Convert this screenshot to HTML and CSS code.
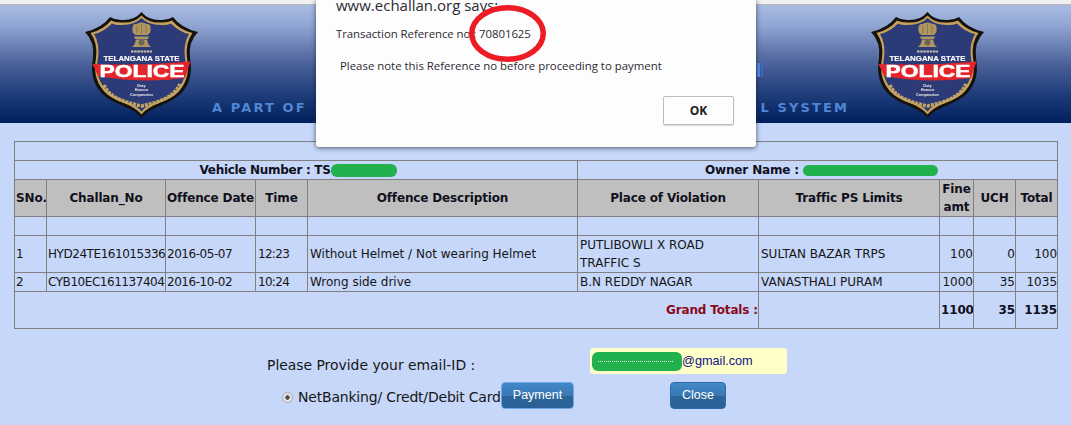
FILE: index.html
```html
<!DOCTYPE html>
<html lang="en">
<head>
<meta charset="utf-8">
<title>e-Challan payment</title>
<link rel="stylesheet" href="styles.css">
</head>
<body>
<div class="top-strip"></div>
<header class="banner">
  <svg class="logo" viewBox="0 0 113 106">
    <path d="M56.5 0Q49 9 36 8Q30 8 25 5Q17 16 0 20Q10 30 8 46C5 62 9 76 21 85C33 94 48 95 56.5 106C65 95 80 94 92 85C104 76 108 62 105 46Q103 30 113 20Q96 16 88 5Q83 8 77 8Q64 9 56.5 0Z" fill="#15120e"/>
    <path d="M56.5 3.500Q49 11.500 36 10.500Q30 10.500 26 8.500Q18 18 5.500 21Q13 31 11 46C8 61 12 74 23 83C34 91 48 92 56.5 102.500C65 92 79 91 90 83C101 74 105 61 102 46Q100 31 107.500 21Q95 18 87 8.500Q83 10.500 77 10.500Q64 11.500 56.5 3.500Z" fill="#c5a15c"/>
    <path d="M56.5 6Q49 13.500 36 13Q30 13 27 11.500Q19 20 9 22Q15 32 13 46C10 60 14 73 25 81C35 89 49 90 56.500 99.500C64 90 78 89 88 81C99 73 103 60 100 46Q98 32 104 22Q94 20 86 11.500Q83 13 77 13Q64 13.500 56.500 6Z" fill="#2d3a78"/>
    <path d="M47.500 16Q47.500 11.500 51.500 12Q53.500 10.500 56.500 10.500Q59.500 10.500 61.500 12Q65.500 11.500 65.500 16Q66.500 21 62.500 23H50.500Q46.500 21 47.500 16ZM49 24.500h15l-1 2.500h-13zM51 27.500h11l1.500 5 2.500 2.500H47l2.500-2.500z" fill="#b09660"/>
    <path d="M56.500 12v10M52 13.500v8M61 13.500v8" stroke="#8a7448" stroke-width=".9"/>
    <circle cx="56.500" cy="30.500" r="3" fill="#6c6455"/>
    <path d="M46 39.500h21" stroke="#c9c3b0" stroke-width="2" stroke-dasharray="2.500 .7"/>
    <text class="logo-state" x="56.500" y="48.500" text-anchor="middle" textLength="76" lengthAdjust="spacingAndGlyphs">TELANGANA STATE</text>
    <path d="M7.500 52Q57 54 105.500 49.500L100 66Q57 72 13 64Z" fill="#e3252c"/>
    <text class="logo-police" x="57" y="64.500" text-anchor="middle" textLength="85" lengthAdjust="spacingAndGlyphs">POLICE</text>
    <text class="logo-motto" x="56.500" y="74.500" text-anchor="middle">Duty</text>
    <text class="logo-motto" x="56.500" y="79" text-anchor="middle">Honour</text>
    <text class="logo-motto" x="56.500" y="83.500" text-anchor="middle">Compassion</text>
    <path d="M19 73C24 85 38 90 56.500 94C75 90 89 85 95 72" fill="none" stroke="#c2a463" stroke-width="3.500" stroke-dasharray="3 1"/>
  </svg>
  <div class="tagline"><span>A PART OF</span><span>L SYSTEM</span></div>
  <svg class="logo" viewBox="0 0 113 106">
    <path d="M56.5 0Q49 9 36 8Q30 8 25 5Q17 16 0 20Q10 30 8 46C5 62 9 76 21 85C33 94 48 95 56.5 106C65 95 80 94 92 85C104 76 108 62 105 46Q103 30 113 20Q96 16 88 5Q83 8 77 8Q64 9 56.5 0Z" fill="#15120e"/>
    <path d="M56.5 3.500Q49 11.500 36 10.500Q30 10.500 26 8.500Q18 18 5.500 21Q13 31 11 46C8 61 12 74 23 83C34 91 48 92 56.5 102.500C65 92 79 91 90 83C101 74 105 61 102 46Q100 31 107.500 21Q95 18 87 8.500Q83 10.500 77 10.500Q64 11.500 56.5 3.500Z" fill="#c5a15c"/>
    <path d="M56.5 6Q49 13.500 36 13Q30 13 27 11.500Q19 20 9 22Q15 32 13 46C10 60 14 73 25 81C35 89 49 90 56.500 99.500C64 90 78 89 88 81C99 73 103 60 100 46Q98 32 104 22Q94 20 86 11.500Q83 13 77 13Q64 13.500 56.500 6Z" fill="#2d3a78"/>
    <path d="M47.500 16Q47.500 11.500 51.500 12Q53.500 10.500 56.500 10.500Q59.500 10.500 61.500 12Q65.500 11.500 65.500 16Q66.500 21 62.500 23H50.500Q46.500 21 47.500 16ZM49 24.500h15l-1 2.500h-13zM51 27.500h11l1.500 5 2.500 2.500H47l2.500-2.500z" fill="#b09660"/>
    <path d="M56.500 12v10M52 13.500v8M61 13.500v8" stroke="#8a7448" stroke-width=".9"/>
    <circle cx="56.500" cy="30.500" r="3" fill="#6c6455"/>
    <path d="M46 39.500h21" stroke="#c9c3b0" stroke-width="2" stroke-dasharray="2.500 .7"/>
    <text class="logo-state" x="56.500" y="48.500" text-anchor="middle" textLength="76" lengthAdjust="spacingAndGlyphs">TELANGANA STATE</text>
    <path d="M7.500 52Q57 54 105.500 49.500L100 66Q57 72 13 64Z" fill="#e3252c"/>
    <text class="logo-police" x="57" y="64.500" text-anchor="middle" textLength="85" lengthAdjust="spacingAndGlyphs">POLICE</text>
    <text class="logo-motto" x="56.500" y="74.500" text-anchor="middle">Duty</text>
    <text class="logo-motto" x="56.500" y="79" text-anchor="middle">Honour</text>
    <text class="logo-motto" x="56.500" y="83.500" text-anchor="middle">Compassion</text>
    <path d="M19 73C24 85 38 90 56.500 94C75 90 89 85 95 72" fill="none" stroke="#c2a463" stroke-width="3.500" stroke-dasharray="3 1"/>
  </svg>
  <span class="title-bit"></span>
</header>

<main class="content">
  <table class="challans">
    <colgroup>
      <col class="c-sno"><col class="c-no"><col class="c-date"><col class="c-time"><col class="c-desc">
      <col class="c-place"><col class="c-ps"><col class="c-fine"><col class="c-uch"><col class="c-total">
    </colgroup>
    <tbody>
      <tr class="r-thin"><td colspan="10"></td></tr>
      <tr class="r-thin">
        <th colspan="5" class="vehicle">Vehicle Number : TS<span class="redact r-vehicle"></span></th>
        <th colspan="5" class="owner">Owner Name : <span class="redact r-owner"></span></th>
      </tr>
      <tr class="r-head">
        <th>SNo.</th><th>Challan_No</th><th class="nowrap">Offence Date</th><th>Time</th><th>Offence Description</th>
        <th>Place of Violation</th><th>Traffic PS Limits</th><th>Fine amt</th><th>UCH</th><th>Total</th>
      </tr>
      <tr class="r-thin"><td></td><td></td><td></td><td></td><td></td><td></td><td></td><td></td><td></td><td></td></tr>
      <tr class="r-tall">
        <td>1</td><td class="digits">HYD24TE161015336</td><td class="digits">2016-05-07</td><td class="pad digits">12:23</td><td class="pad">Without Helmet / Not wearing Helmet</td>
        <td class="pad wrap">PUTLIBOWLI X ROAD TRAFFIC S</td><td class="pad">SULTAN BAZAR TRPS</td><td class="num">100</td><td class="num">0</td><td class="num">100</td>
      </tr>
      <tr class="r-thin">
        <td>2</td><td class="digits">CYB10EC161137404</td><td class="digits">2016-10-02</td><td class="pad digits">10:24</td><td class="pad">Wrong side drive</td>
        <td class="pad">B.N REDDY NAGAR</td><td class="pad">VANASTHALI PURAM</td><td class="num">1000</td><td class="num">35</td><td class="num">1035</td>
      </tr>
      <tr class="r-tall r-totals">
        <th colspan="6" class="grand">Grand Totals :</th><td></td><th class="num">1100</th><th class="num">35</th><th class="num">1135</th>
      </tr>
    </tbody>
  </table>

  <form class="pay">
    <div class="pay-email">
      <label class="pay-label" for="email">Please Provide your email-ID :</label>
      <div class="email-box" id="email"><span class="redact r-email"><span class="r-dots"></span></span>@gmail.com</div>
    </div>
    <div class="pay-method">
      <span class="radio"></span>
      <span class="method">NetBanking/ Credt/Debit Card</span>
      <button type="button" class="btn btn-focus">Payment</button>
      <button type="button" class="btn btn-close">Close</button>
    </div>
  </form>
</main>

<section class="dialog">
  <div class="dialog-title">www.echallan.org says:</div>
  <p class="dialog-ref">Transaction Reference no : 70801625</p>
  <p class="dialog-note">Please note this Reference no before proceeding to payment</p>
  <div class="dialog-actions"><button type="button" class="ok">OK</button></div>
</section>

<svg class="ring" viewBox="0 0 80 62"><ellipse cx="39.500" cy="31.500" rx="35.750" ry="25.750"/></svg>
</body>
</html>
```
FILE: styles.css
```css
* { box-sizing: border-box; }
html, body { margin: 0; height: 100%; }
body {
  position: relative;
  height: 425px;
  overflow: hidden;
  background: #c6d7f9;
  font-family: "DejaVu Sans", Verdana, sans-serif;
  color: #161616;
}

.top-strip { height: 5px; background: #f0f0f0; border-bottom: 1px solid #b9b9b9; }
.banner {
  display: flex;
  align-items: flex-start;
  height: 118px;
  padding: 7px 87px 0 85px;
  background: linear-gradient(#a9bce4 0%, #8fa4d2 18%, #4a6199 50%, #1b3a78 78%, #001f5c 100%);
}
.logo { flex: none; width: 113px; height: 106px; filter: blur(.35px); }
.logo-state { font: 700 8px "Liberation Sans", sans-serif; fill: #fff; stroke: #fff; stroke-width: .15px; }
.logo-police { font: 700 16.500px "Liberation Sans", sans-serif; fill: #fff; stroke: #fff; stroke-width: .5px; }
.logo-motto { font: 700 3.800px "Liberation Sans", sans-serif; fill: #f3f0e6; }

.tagline {
  flex: 1;
  display: flex;
  justify-content: space-between;
  margin: 88px 22px 0 14px;
  font: 700 13px "DejaVu Sans", sans-serif;
  letter-spacing: 2.100px;
  color: #4f86d6;
}
.title-bit {
  position: absolute;
  left: 757px;
  top: 63px;
  width: 6px;
  height: 14px;
  border-left: 3px solid #4d8ce6;
  border-right: 2px solid #3a69bc;
}

.content { padding: 18px 14px 0; }
.challans {
  width: 1044px;
  table-layout: fixed;
  border-collapse: collapse;
  border: 1px solid #2b2b33;
  font-size: 12px;
  line-height: 18px;
}
.c-sno { width: 32px; } .c-no { width: 119px; } .c-date { width: 90px; } .c-time { width: 52px; }
.c-desc { width: 270px; } .c-place { width: 181px; } .c-ps { width: 181px; } .c-fine { width: 34px; }
.c-uch { width: 42px; } .c-total { width: 42px; }
.challans th, .challans td {
  padding: 0 1px;
  border: 1px solid #808080;
  white-space: nowrap;
  overflow: hidden;
}
.challans th { font-weight: 700; text-align: center; font-size: 12px; letter-spacing: -.15px; color: #10101c; }
.r-thin { height: 19px; }
.r-head { height: 37px; }
.r-tall { height: 37px; }
.r-head th { background: #bfbfbf; white-space: normal; }
.challans .nowrap { white-space: nowrap; padding: 0; }
.challans .digits { letter-spacing: -.45px; }
.challans .pad { padding-left: 2px; }
.challans .pad.digits { letter-spacing: -.7px; }
.challans .wrap { white-space: normal; padding-right: 30px; }
.challans .num { text-align: right; padding-right: 0; }
.challans .grand { text-align: right; color: #8b0a1a; padding-right: 0; }
.challans .vehicle { padding-left: 5px; letter-spacing: -.3px; }
.challans .owner { padding-left: 9px; }

.redact { display: inline-block; background: #22b14c; border-radius: 6px; vertical-align: middle; }
.r-vehicle { width: 66px; height: 13px; }
.r-owner { width: 135px; height: 11px; }
.r-email { position: relative; flex: none; width: 90px; height: 19px; }
.r-dots { position: absolute; left: 6px; right: 9px; top: 9px; border-top: 1px dotted #e8f5e8; }

.pay { font-size: 14px; }
.pay-email { display: flex; align-items: flex-start; height: 26px; margin: 19px 0 0 253px; }
.pay-label { width: 323px; margin-top: 8px; font-size: 13.900px; line-height: 18px; }
.email-box {
  display: flex;
  align-items: center;
  width: 197px;
  height: 26px;
  padding-left: 2px;
  background: #ffffc8;
  border-radius: 3px;
  font: 12.700px "Liberation Sans", sans-serif;
  color: #10108a;
}
.pay-method { display: flex; align-items: center; height: 28px; margin: 7px 0 0 268px; }
.radio {
  flex: none;
  width: 11px;
  height: 11px;
  margin: 5px 5px 0 0;
  border: 1px solid #a9a9a9;
  border-radius: 50%;
  background: radial-gradient(circle, #555 0 2px, #e7e7e7 2.500px);
}
.method { flex: none; width: 203px; padding-top: 3px; white-space: nowrap; letter-spacing: -.2px; }
.btn {
  height: 27px;
  border: 1px solid #2b6aa6;
  border-radius: 4px;
  padding: 0;
  background: linear-gradient(#4288c9 0%, #3a78b4 50%, #2d6499 52%, #2a6096 100%);
  color: #fff;
  font: 12.500px "Liberation Sans", sans-serif;
}
.btn-focus { width: 73px; border-color: #6ea6ee; }
.btn-close { width: 56px; margin-left: 96px; }

.dialog {
  position: absolute;
  left: 316px;
  top: 0;
  width: 440px;
  height: 147px;
  padding: 0 22px 0 20px;
  background: #fdfdfd;
  border-radius: 0 0 3px 3px;
  box-shadow: 0 1px 5px rgba(30, 30, 50, .7);
  font-family: "Open Sans", sans-serif;
  color: #2b2b33;
}
.dialog-title { margin-top: -5px; font-size: 15px; line-height: 20px; }
.dialog-ref { margin: 10px 0 0; font-size: 11.400px; line-height: 18px; letter-spacing: -.05px; }
.dialog-note { margin: 14px 0 0 4px; font-size: 11.400px; line-height: 18px; }
.dialog-actions { display: flex; justify-content: flex-end; margin-top: 21px; }
.ok {
  width: 71px;
  height: 29px;
  background: #fdfdfd;
  border: 1px solid #bdbdbd;
  border-radius: 2px;
  box-shadow: 0 1px 1px rgba(0, 0, 0, .15);
  font: 700 12px "Open Sans", sans-serif;
  color: #1a1a1a;
}
.ring { position: absolute; left: 468px; top: 2px; width: 80px; height: 62px; }
.ring ellipse { fill: none; stroke: #ed1c24; stroke-width: 5.500; }
```
